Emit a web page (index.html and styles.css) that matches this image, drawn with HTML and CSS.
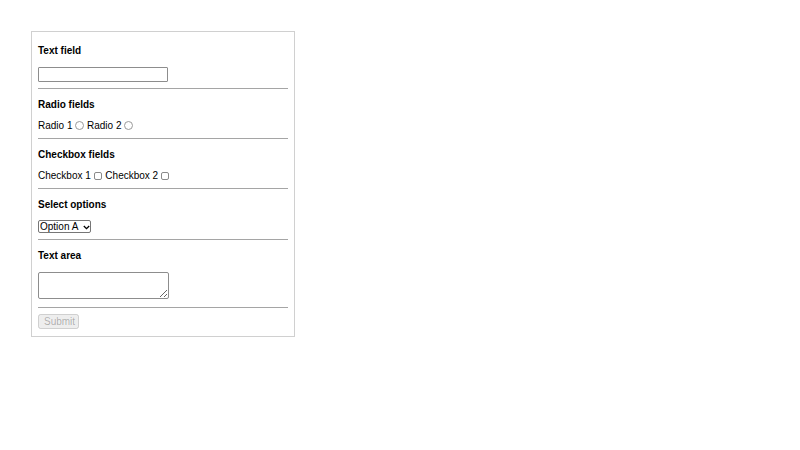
FILE: index.html
```html
<!DOCTYPE html>
<html>
<head>
<meta charset="utf-8">
<link rel="stylesheet" href="styles.css">
</head>
<body>
<form class="form">
  <div class="title first">Text field</div>
  <div class="row row-text"><input class="text-input" type="text"></div>
  <hr class="sep">
  <div class="title">Radio fields</div>
  <div class="row row-plain">Radio 1 <input class="radio" type="radio" name="r"> Radio 2 <input class="radio" type="radio" name="r"></div>
  <hr class="sep">
  <div class="title">Checkbox fields</div>
  <div class="row row-plain">Checkbox 1 <input class="check" type="checkbox"> Checkbox 2 <input class="check" type="checkbox"></div>
  <hr class="sep">
  <div class="title">Select options</div>
  <div class="row row-select"><select class="select"><option>Option A</option><option>Option B</option></select></div>
  <hr class="sep">
  <div class="title">Text area</div>
  <div class="row row-area"><textarea class="area"></textarea></div>
  <hr class="sep sep-last">
  <div class="row row-submit"><button class="submit" type="submit" disabled>Submit</button></div>
</form>
</body>
</html>
```
FILE: styles.css
```css
html, body {
  margin: 0;
  padding: 0;
  background: #ffffff;
}
body {
  padding: 31px;
  font-family: "Liberation Sans", Arial, sans-serif;
  font-size: 10px;
  line-height: 12px;
  color: #000;
}
.form {
  width: 264px;
  box-sizing: border-box;
  border: 1px solid #d0d0d0;
  padding: 13px 6px 7px 6px;
}
.title {
  font-weight: bold;
  line-height: 12px;
  height: 12px;
  margin-bottom: 9px;
}
.row {
  display: block;
  white-space: nowrap;
}
.row-plain {
  height: 12px;
  line-height: 12px;
}
.row-text {
  height: 16px;
  display: flex;
  align-items: flex-end;
}
.row-select {
  height: 13px;
  display: flex;
  align-items: flex-start;
}
.row-area {
  height: 30px;
  display: flex;
  align-items: flex-start;
  padding-top: 1px;
  box-sizing: border-box;
}
.row-submit {
  display: flex;
  height: 15px;
}
.sep {
  border: 0;
  border-top: 1px solid #a5a5a5;
  height: 0;
  margin: 6px 0 10px 0;
}
.sep-last {
  margin-bottom: 6px;
}
.text-input {
  width: 130px;
  height: 15px;
  box-sizing: border-box;
  border: 1px solid #8d8d8d;
  border-radius: 1px;
  padding: 0 2px;
  margin: 0;
  font-size: 10px;
}
.radio, .check {
  -webkit-appearance: none;
  appearance: none;
  width: 9px;
  height: 9px;
  margin: 0;
  box-sizing: border-box;
  background: #fff;
  vertical-align: -1px;
}
.radio {
  border: 1px solid #9a9a9a;
  border-radius: 50%;
}
.check {
  width: 8px;
  height: 8px;
  margin: 0 0.5px;
  border: 1px solid #8a8a8a;
  border-radius: 2px;
}
.select {
  -webkit-appearance: none;
  appearance: none;
  font-family: "Liberation Sans", Arial, sans-serif;
  font-size: 10px;
  line-height: 11px;
  height: 13px;
  width: 53px;
  box-sizing: border-box;
  padding: 0 0 0 1px;
  margin: 0;
  color: #000;
  border: 1px solid #767676;
  border-radius: 2px;
  background-color: #fff;
  background-image: url("data:image/svg+xml,%3Csvg xmlns='http://www.w3.org/2000/svg' width='7' height='5' viewBox='0 0 7 5'%3E%3Cpath d='M0.8 1 L3.5 3.7 L6.2 1' fill='none' stroke='%23000' stroke-width='1.3'/%3E%3C/svg%3E");
  background-repeat: no-repeat;
  background-position: 44px 4px;
  background-size: 7px 5px;
}
.area {
  width: 131px;
  height: 27px;
  box-sizing: border-box;
  margin: 0;
  border: 1px solid #8d8d8d;
  border-radius: 2px;
  padding: 2px;
  font-size: 10px;
}
.submit {
  font-family: "Liberation Sans", Arial, sans-serif;
  font-size: 10px;
  line-height: 11px;
  height: 15px;
  width: 41px;
  padding: 0 4px;
  margin: 0;
}
```
